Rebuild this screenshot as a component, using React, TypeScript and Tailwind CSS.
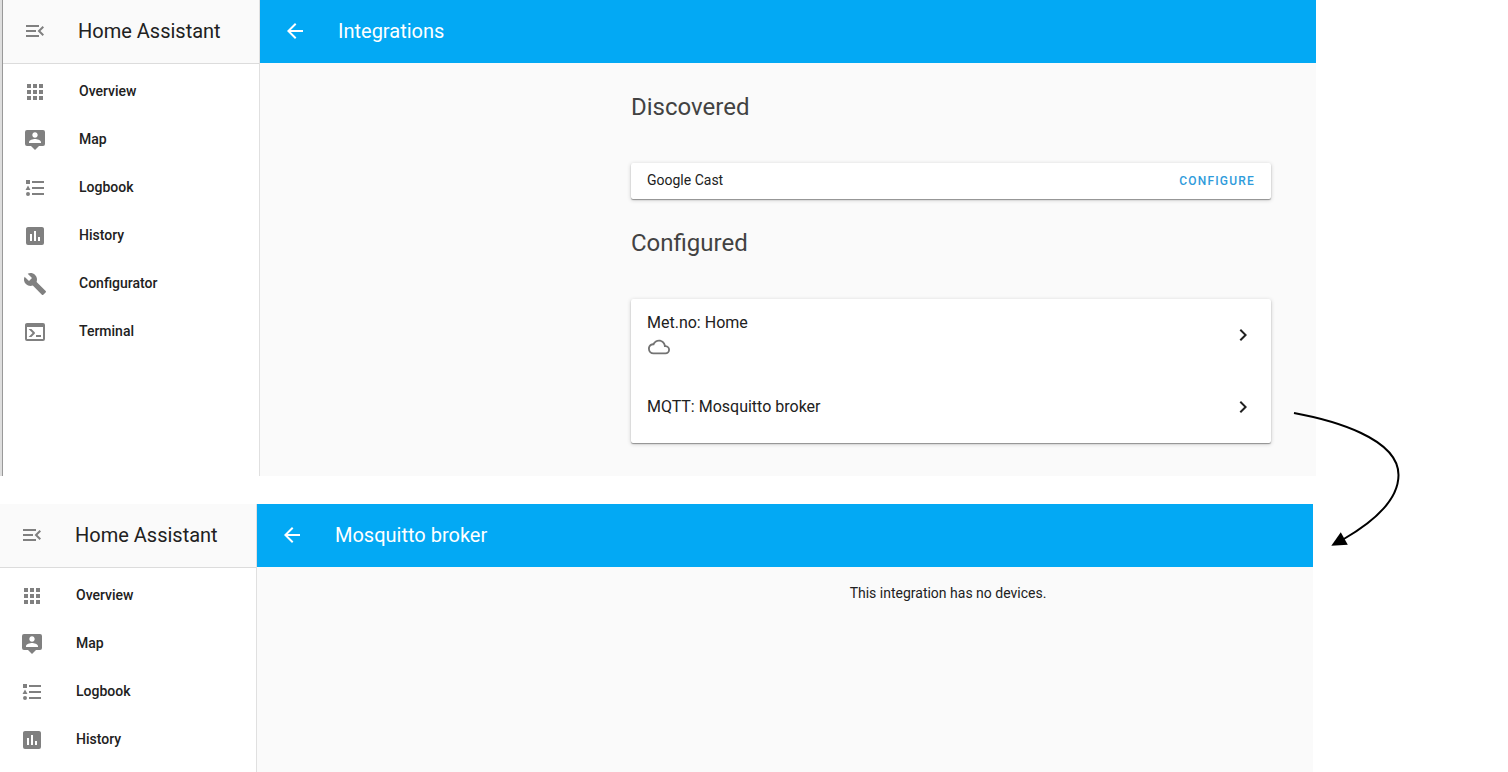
import React from 'react';

const ICONS = {
  menuOpen:
    'M21,15.61L19.59,17L14.58,12L19.59,7L21,8.39L17.44,12L21,15.61M3,6H16V8H3V6M3,13V11H13V13H3M3,18V16H16V18H3Z',
  apps: 'M16,20H20V16H16M16,14H20V10H16M10,8H14V4H10M16,8H20V4H16M10,14H14V10H10M4,14H8V10H4M4,20H8V16H4M10,20H14V16H10M4,8H8V4H4V8Z',
  map: 'M20,2H4A2,2 0 0,0 2,4V16A2,2 0 0,0 4,18H8L12,22L16,18H20A2,2 0 0,0 22,16V4A2,2 0 0,0 20,2M12,4.3C13.5,4.3 14.7,5.5 14.7,7C14.7,8.5 13.5,9.7 12,9.7C10.5,9.7 9.3,8.5 9.3,7C9.3,5.5 10.5,4.3 12,4.3M18,15H6V14.1C6,12.1 10,11 12,11C14,11 18,12.1 18,14.1V15Z',
  logbook:
    'M5,9.5L7.5,14H2.5L5,9.5M3,4H7V8H3V4M5,20A2,2 0 0,0 7,18A2,2 0 0,0 5,16A2,2 0 0,0 3,18A2,2 0 0,0 5,20M9,5V7H21V5H9M9,19H21V17H9V19M9,13H21V11H9V13Z',
  history:
    'M17,17H15V13H17M13,17H11V7H13M9,17H7V10H9M19,3H5C3.89,3 3,3.89 3,5V19A2,2 0 0,0 5,21H19A2,2 0 0,0 21,19V5C21,3.89 20.1,3 19,3Z',
  wrench:
    'M22.7,19L13.6,9.9C14.5,7.6 14,4.9 12.1,3C10.1,1 7.1,0.6 4.7,1.7L9,6L6,9L1.6,4.7C0.4,7.1 0.9,10.1 2.9,12.1C4.8,14 7.5,14.5 9.8,13.6L18.9,22.7C19.3,23.1 19.9,23.1 20.3,22.7L22.6,20.4C23.1,20 23.1,19.3 22.7,19Z',
  terminal:
    'M20,19V7H4V19H20M20,3A2,2 0 0,1 22,5V19A2,2 0 0,1 20,21H4A2,2 0 0,1 2,19V5C2,3.89 2.9,3 4,3H20M13,17V15H18V17H13M9.58,13L5.57,9H8.4L11.7,12.3C12.09,12.69 12.09,13.33 11.7,13.72L8.42,17H5.59L9.58,13Z',
  arrowLeft: 'M20 11H7.83l5.59-5.59L12 4l-8 8 8 8 1.41-1.41L7.83 13H20v-2z',
  chevronRight: 'M8.59,16.58L13.17,12L8.59,7.41L10,6L16,12L10,18L8.59,16.58Z',
  cloud:
    'M19,18H6A4,4 0 0,1 2,14A4,4 0 0,1 6,10H6.71C7.37,7.69 9.5,6 12,6A5.5,5.5 0 0,1 17.5,11.5V12H19A3,3 0 0,1 22,15A3,3 0 0,1 19,18M19.35,10.03C18.67,6.59 15.64,4 12,4C9.11,4 6.6,5.64 5.35,8.03C2.34,8.36 0,10.9 0,14A6,6 0 0,0 6,20H19A5,5 0 0,0 24,15C24,12.36 21.95,10.22 19.35,10.03Z',
};

type IconName = keyof typeof ICONS;

const Icon: React.FC<{ name: IconName; className?: string }> = ({ name, className = 'size-6' }) => (
  <svg viewBox="0 0 24 24" fill="currentColor" fillRule="evenodd" aria-hidden="true" className={`shrink-0 ${className}`}>
    <path d={ICONS[name]} />
  </svg>
);

const NAV_ITEMS: { label: string; icon: IconName }[] = [
  { label: 'Overview', icon: 'apps' },
  { label: 'Map', icon: 'map' },
  { label: 'Logbook', icon: 'logbook' },
  { label: 'History', icon: 'history' },
  { label: 'Configurator', icon: 'wrench' },
  { label: 'Terminal', icon: 'terminal' },
];

const Sidebar: React.FC<{ items: typeof NAV_ITEMS }> = ({ items }) => (
  <aside className="w-[257px] shrink-0 border-r border-[#e0e0e0] bg-white">
    <div className="flex h-16 items-center gap-[31px] border-b border-[#dcdcdc] bg-[#fafafa] px-5 pb-px">
      <button type="button" aria-label="Collapse sidebar" className="text-[#808080]">
        <Icon name="menuOpen" />
      </button>
      <span className="text-xl text-[#212121]">Home Assistant</span>
    </div>
    <nav className="pt-1">
      {items.map((item) => (
        <a key={item.label} href="#" className="flex h-12 items-center gap-8 px-5 text-[#808080]">
          <Icon name={item.icon} />
          <span className="pb-0.5 text-sm font-medium text-[#212121]">{item.label}</span>
        </a>
      ))}
    </nav>
  </aside>
);

const Screen: React.FC<{ title: string; items: typeof NAV_ITEMS; children: React.ReactNode }> = ({
  title,
  items,
  children,
}) => (
  <div className="flex min-w-0 flex-1">
    <Sidebar items={items} />
    <main className="min-w-0 flex-1 bg-[#fafafa]">
      <header className="flex h-[63px] items-center gap-[31px] bg-[#03a9f4] px-[23px] pb-px text-white">
        <button type="button" aria-label="Back">
          <Icon name="arrowLeft" />
        </button>
        <h1 className="text-xl font-normal">{title}</h1>
      </header>
      {children}
    </main>
  </div>
);

const Card: React.FC<{ children: React.ReactNode }> = ({ children }) => (
  <div className="mt-10 rounded-xs bg-white text-[#212121] shadow-[0_1px_1px_rgba(0,0,0,0.35),0_1px_4px_rgba(0,0,0,0.2)]">
    {children}
  </div>
);

const App: React.FC = () => {
  return (
    <div className="relative min-h-screen overflow-hidden bg-white font-['Roboto',sans-serif]">
      <section className="mr-48 flex min-h-[476px]">
        {/* Edge of the window behind */}
        <div className="w-[3px] shrink-0 border-r border-[#999] bg-[#dedede]" />
        <Screen title="Integrations" items={NAV_ITEMS}>
          <div className="mr-[45px] ml-auto max-w-[640px] pt-7 pb-8">
            <h2 className="text-2xl text-[#424242]">Discovered</h2>
            <Card>
              <div className="flex h-9 items-center justify-between px-4">
                <span className="pb-0.5 text-sm">Google Cast</span>
                <button type="button" className="text-xs font-medium tracking-widest text-[#2f9bdb] uppercase">
                  Configure
                </button>
              </div>
            </Card>
            <h2 className="mt-7 text-2xl text-[#424242]">Configured</h2>
            <Card>
              <a href="#" className="flex h-[72px] items-center justify-between px-4">
                <div className="flex flex-col gap-px pb-px">
                  <span>Met.no: Home</span>
                  <Icon name="cloud" className="ml-px size-[22px] text-[#737373]" />
                </div>
                <Icon name="chevronRight" />
              </a>
              <a href="#" className="flex h-[72px] items-center justify-between px-4">
                <span>MQTT: Mosquitto broker</span>
                <Icon name="chevronRight" />
              </a>
            </Card>
          </div>
        </Screen>
      </section>

      <section className="mt-7 mr-[195px] flex min-h-[268px]">
        <Screen title="Mosquitto broker" items={NAV_ITEMS.slice(0, 4)}>
          <p className="mr-[45px] ml-auto max-w-[640px] pt-4 text-center text-sm text-[#212121]">
            This integration has no devices.
          </p>
        </Screen>
      </section>

      {/* Arrow from the broker row to its detail page */}
      <svg
        viewBox="1290 408 112 142"
        className="absolute top-[408px] right-[106px] h-[142px] w-[112px]"
        aria-hidden="true"
      >
        <path
          d="M1294 413C1332 420 1398.5 438 1398.5 475C1398.5 499 1375 521 1343 539.5"
          fill="none"
          stroke="#000"
          strokeWidth="2"
        />
        <path d="M1331.3 545.8L1340.8 532.3L1347.8 544.7Z" />
      </svg>
    </div>
  );
};

export default App;
